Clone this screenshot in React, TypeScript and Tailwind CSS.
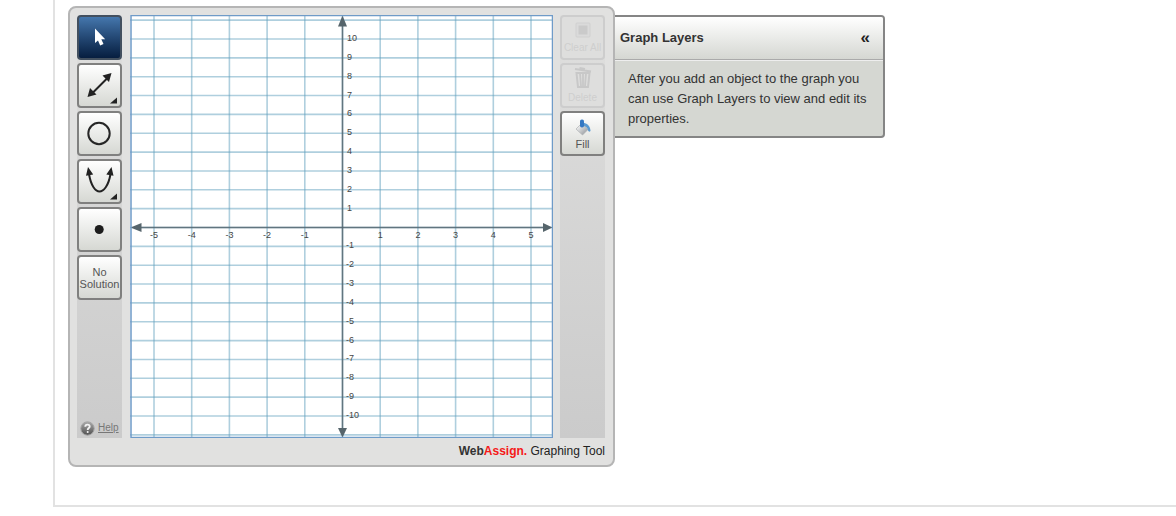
import { useState, type ReactNode } from "react";

const SIZE = 423;
const CENTER = 212.5;
const STEP_X = 37.7;
const STEP_Y = 18.85;

function range(limit: number): number[] {
  return Array.from({ length: limit * 2 + 1 }, (_, i) => i - limit);
}

function Graph() {
  return (
    <svg
      viewBox={`0 0 ${SIZE} ${SIZE}`}
      className="block h-[423px] w-[423px] shrink-0 bg-white"
      role="img"
      aria-label="Coordinate plane"
    >
      <g stroke="#5fa0bd" strokeOpacity="0.5" strokeWidth="1.6">
        {range(11).map((n) => (
          <line key={`h${n}`} x1="0" x2={SIZE} y1={CENTER - n * STEP_Y} y2={CENTER - n * STEP_Y} />
        ))}
        {range(5).map((n) => (
          <line key={`v${n}`} y1="0" y2={SIZE} x1={CENTER + n * STEP_X} x2={CENTER + n * STEP_X} />
        ))}
      </g>
      <g stroke="#53656f" strokeOpacity="0.85" strokeWidth="1.5">
        <line x1="4" x2="419" y1={CENTER} y2={CENTER} />
        <line y1="4" y2="419" x1={CENTER} x2={CENTER} />
      </g>
      <g fill="#56656c">
        <path d="M0.5 212.5 11.5 208v9z" />
        <path d="M422.5 212.5 413 208v9z" />
        <path d="M212.5 0.5 208 11.5h9z" />
        <path d="M212.5 422.5 208 413h9z" />
      </g>
      <g className="font-['Liberation_Sans',Arial,sans-serif] text-[9px]" fill="#454545">
        {range(10)
          .filter((n) => n !== 0)
          .map((n) => (
            <text key={n} x={n < 0 ? 216 : 217} y={CENTER - n * STEP_Y + 2}>
              {n}
            </text>
          ))}
        {range(5)
          .filter((n) => n !== 0)
          .map((n) => (
            <text key={n} x={CENTER + n * STEP_X} y="223" textAnchor="middle">
              {n}
            </text>
          ))}
      </g>
      <rect x="1" y="0.5" width="421.5" height="422" fill="none" stroke="#6f9bc8" strokeWidth="1.5" />
    </svg>
  );
}

type ToolButtonProps = {
  label: string;
  children: ReactNode;
  active?: boolean;
  disabled?: boolean;
  onClick?: () => void;
};

function ToolButton({ label, children, active, disabled, onClick }: ToolButtonProps) {
  const look = disabled
    ? "border-[#cdcdcd] bg-[#dededd] text-[#cecece]"
    : active
      ? "border-[#43505f] bg-linear-to-b from-[#4577ad] to-[#071e40] text-white"
      : "border-[#80807f] bg-linear-to-b from-white to-[#d6d8d3] text-[#555]";
  return (
    <button
      type="button"
      aria-label={label}
      disabled={disabled}
      onClick={onClick}
      className={`flex h-[45px] w-full shrink-0 flex-col items-center justify-center rounded-[4px] border-2 ${look}`}
    >
      {children}
    </button>
  );
}

function PointerIcon() {
  return (
    <svg viewBox="0 0 41 41" className="size-[41px]" fill="white">
      <path d="M16 11.500v14.600l3-2.700 2.200 5 3.300-1.400-2.200-4.800h3.900z" />
    </svg>
  );
}

function LineIcon() {
  return (
    <svg viewBox="0 0 41 41" className="size-[41px]" fill="#222">
      <path d="M13 28.500 29 12.500" stroke="#222" strokeWidth="2" />
      <path d="M8.500 32 11 23 17.500 29.500zM32.500 8 30 17 23.500 10.500z" />
      <path d="M38 32.500v6h-7z" />
    </svg>
  );
}

function CircleIcon() {
  return (
    <svg viewBox="0 0 41 41" className="size-[41px]" fill="none" stroke="#262626" strokeWidth="2">
      <circle cx="20" cy="20.5" r="10.7" />
    </svg>
  );
}

function ParabolaIcon() {
  return (
    <svg viewBox="0 0 41 41" className="size-[41px]" fill="#222">
      <path d="M10 13C12 25 16.5 30.5 20.5 30.5S29.5 25 31.5 13" fill="none" stroke="#222" strokeWidth="2" />
      <path d="M9 6 14.2 13.5 7 14.8zM32.5 6 34.500 14.8 27.3 13.5z" />
      <path d="M38 32.5v6h-7z" />
    </svg>
  );
}

function PointIcon() {
  return (
    <svg viewBox="0 0 41 41" className="size-[41px]" fill="#1d1d1d">
      <circle cx="20.2" cy="20.5" r="4.5" />
    </svg>
  );
}

function ClearIcon() {
  return (
    <svg viewBox="0 0 16 16" className="size-4">
      <rect x="1" y="1" width="14" height="14" rx="1" fill="#dadada" stroke="#d0d0d0" />
      <rect x="3.5" y="3.5" width="9" height="9" fill="#cacaca" />
    </svg>
  );
}

function TrashIcon() {
  return (
    <svg viewBox="0 0 18 21" className="h-[21px] w-[18px]" fill="none" stroke="#c8c8c8">
      <path d="M1 2 17 4.5M5.500 1l5.500 1" strokeWidth="2" />
      <path d="M2.500 6 4 20h10L15.500 6z" strokeWidth="2" />
      <path d="M6 6.500 7 19M9 6.500V19M12 6.500 11 19" strokeWidth="1.800" />
    </svg>
  );
}

function FillIcon() {
  return (
    <svg viewBox="0 0 18 18" className="size-[18px]">
      <defs>
        <linearGradient id="bucket" x1="0" y1="0" x2="1" y2="1">
          <stop offset="0.2" stopColor="#f3f3f3" />
          <stop offset="1" stopColor="#858b91" />
        </linearGradient>
      </defs>
      <path d="M2 11 8 5 14 11.500 8.500 17z" fill="url(#bucket)" stroke="#adb0b2" strokeWidth=".7" />
      <path d="M9 5c4 0 7 2.500 7.500 7.500 0 1.500-2 1.500-2.500 0C13.500 9.500 12 8 9 8z" fill="#5c9bd2" />
      <rect x="6" y="1.500" width="4" height="8" rx="1.800" fill="#3478c3" />
    </svg>
  );
}

function HelpIcon() {
  return (
    <svg viewBox="0 0 15 15" className="size-[15px] shrink-0">
      <defs>
        <linearGradient id="help-ring" x1="0" y1="0" x2="0" y2="1">
          <stop offset="0" stopColor="#aaa" />
          <stop offset="1" stopColor="#505050" />
        </linearGradient>
      </defs>
      <circle cx="7.500" cy="7.500" r="6.700" fill="url(#help-ring)" stroke="#a5a5a5" />
      <path d="M5.300 5.700C5.300 3 9.700 3 9.700 5.500 9.700 7.200 7.700 7 7.700 9" fill="none" stroke="#f2f2f2" strokeWidth="1.900" />
      <circle cx="7.700" cy="11" r="1" fill="#f2f2f2" />
    </svg>
  );
}

const tools: { name: string; icon: ReactNode }[] = [
  { name: "Select", icon: <PointerIcon /> },
  { name: "Line", icon: <LineIcon /> },
  { name: "Circle", icon: <CircleIcon /> },
  { name: "Parabola", icon: <ParabolaIcon /> },
  { name: "Point", icon: <PointIcon /> },
  {
    name: "No Solution",
    icon: (
      <span className="text-[11px] leading-[12px]">
        No
        <br />
        Solution
      </span>
    ),
  },
];

const rail = "flex w-[45px] shrink-0 flex-col gap-[3px] bg-linear-to-b from-[#dfdfde] to-[#cbcbcb]";

export default function App() {
  const [selected, setSelected] = useState("Select");
  const [open, setOpen] = useState(true);

  return (
    <main className="ml-[53px] flex items-start border-b-2 border-l-2 border-[#e2e2e2] pt-[6px] pb-[38px] pl-[13px] font-['Liberation_Sans',Arial,sans-serif]">
      <section className="shrink-0 rounded-lg border-2 border-[#b5b5b5] bg-[#e1e1e0] pt-[7px] pr-2 pl-[7px]">
        <div className="flex">
          <div className={`${rail} mr-2`}>
            {tools.map(({ name, icon }) => (
              <ToolButton key={name} label={name} active={selected === name} onClick={() => setSelected(name)}>
                {icon}
              </ToolButton>
            ))}
            <a href="#help" className="mt-auto flex items-center gap-[3px] pb-[2px] pl-[3px] text-[10px] leading-4 text-[#777] underline">
              <HelpIcon />
              Help
            </a>
          </div>
          <Graph />
          <div className={`${rail} ml-[7px]`}>
            <ToolButton label="Clear All" disabled>
              <ClearIcon />
              <span className="pt-1 text-[10px] leading-[12px] whitespace-nowrap">Clear All</span>
            </ToolButton>
            <ToolButton label="Delete" disabled>
              <TrashIcon />
              <span className="pt-1 text-[10px] leading-[12px]">Delete</span>
            </ToolButton>
            <ToolButton label="Fill">
              <FillIcon />
              <span className="pt-[2px] text-[11px] leading-[12px]">Fill</span>
            </ToolButton>
          </div>
        </div>
        <p className="pt-1 pb-[5px] text-right text-[12px] leading-[18px] text-[#222]">
          <b className="text-[#333]">Web</b>
          <b className="text-[#f51919]">Assign.</b> Graphing Tool
        </p>
      </section>

      <aside className="mt-[9px] w-[270px] overflow-hidden rounded-r border-2 border-l-0 border-[#858585] bg-[#d5d7d2] text-[#333]">
        <header className="flex h-[43px] items-center justify-between border-b border-[#aaa] bg-linear-to-b from-white to-[#d5d7d2] pr-[13px] pl-[5px]">
          <h2 className="text-[13px] leading-5 font-bold">Graph Layers</h2>
          <button
            type="button"
            aria-label="Toggle graph layers"
            aria-expanded={open}
            onClick={() => setOpen(!open)}
            className="text-[17px] leading-5 font-bold text-[#222]"
          >
            «
          </button>
        </header>
        {open && (
          <p className="border-t border-[#eee] pt-2 pr-3 pb-[7px] pl-[13px] text-[13px] leading-5">
            After you add an object to the graph you can use Graph Layers to view and edit its properties.
          </p>
        )}
      </aside>
    </main>
  );
}
